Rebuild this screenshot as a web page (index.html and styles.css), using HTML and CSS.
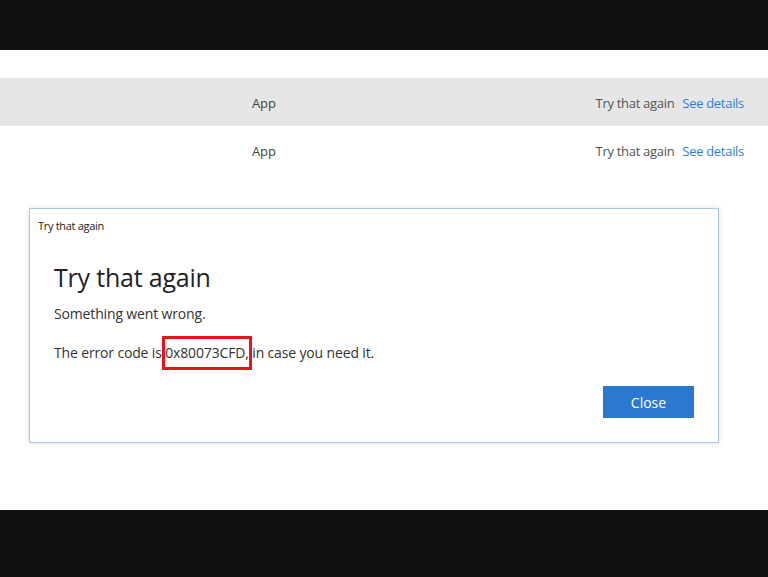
FILE: index.html
```html
<!DOCTYPE html>
<html>
<head>
<meta charset="utf-8">
<link rel="stylesheet" href="styles.css">
</head>
<body>
<div class="bar"></div>
<main class="page">
  <div class="row row-gray">
    <span class="app">App</span>
    <span class="status">Try that again</span>
    <a class="link">See details</a>
  </div>
  <div class="row row-second">
    <span class="app">App</span>
    <span class="status">Try that again</span>
    <a class="link">See details</a>
  </div>
  <section class="dialog">
    <div class="dtitle">Try that again</div>
    <h1 class="heading">Try that again</h1>
    <p class="msg">Something went wrong.</p>
    <p class="msg code-line">The error code is <span class="code">0x80073CFD,</span> in case you need it.</p>
    <div class="actions"><button class="close">Close</button></div>
  </section>
</main>
<div class="bar bar-bottom"></div>
</body>
</html>
```
FILE: styles.css
```css
html, body { margin: 0; padding: 0; }
body {
  width: 768px;
  height: 577px;
  overflow: hidden;
  background: #fff;
  font-family: "Open Sans", "Noto Sans", sans-serif;
  color: #333;
}
.bar { height: 50px; background: #101010; }
.bar-bottom { height: 67px; }
.page {
  height: 460px;
  padding-top: 28px;
  box-sizing: border-box;
}
.row {
  height: 48px;
  display: flex;
  align-items: center;
  font-size: 13px;
  letter-spacing: -0.3px;
  box-sizing: border-box;
}
.row-gray { background: #e6e6e6; padding-top: 1px; }
.row-second { padding-top: 2px; }
.app { margin-left: 252px; color: #444; letter-spacing: -0.1px; }
.status { margin-left: auto; margin-right: 2px; color: #555; }
.link { margin-left: 6px; margin-right: 24px; color: #2f7fd6; }
.dialog {
  margin: 34px 0 0 29px;
  width: 690px;
  height: 235px;
  box-sizing: border-box;
  border: 1px solid #a9c6e6;
  box-shadow: 0 0 6px rgba(0,0,0,0.12);
  padding: 0 24px 0 24px;
}
.dtitle {
  font-size: 11px;
  color: #222;
  margin: 9px 0 0 -16px;
  letter-spacing: -0.3px;
}
.heading {
  font-weight: 400;
  font-size: 25px;
  margin: 28px 0 0 0;
  color: #222;
  letter-spacing: -0.2px;
  line-height: 32px;
}
.msg {
  font-size: 14px;
  margin: 11px 0 0 0;
  color: #333;
  letter-spacing: -0.15px;
  line-height: 20px;
}
.code-line { margin-top: 19px; }
.code {
  position: relative;
}
.code::before {
  content: "";
  position: absolute;
  left: -3px;
  right: -3px;
  top: -7px;
  bottom: -8px;
  border: 3px solid #e8141b;
}
.actions {
  display: flex;
  justify-content: flex-end;
  margin-top: 23px;
}
.close {
  width: 91px;
  height: 32px;
  background: #2b78d0;
  border: none;
  color: #fff;
  font-family: inherit;
  font-size: 14px;
  padding: 0;
}
```
